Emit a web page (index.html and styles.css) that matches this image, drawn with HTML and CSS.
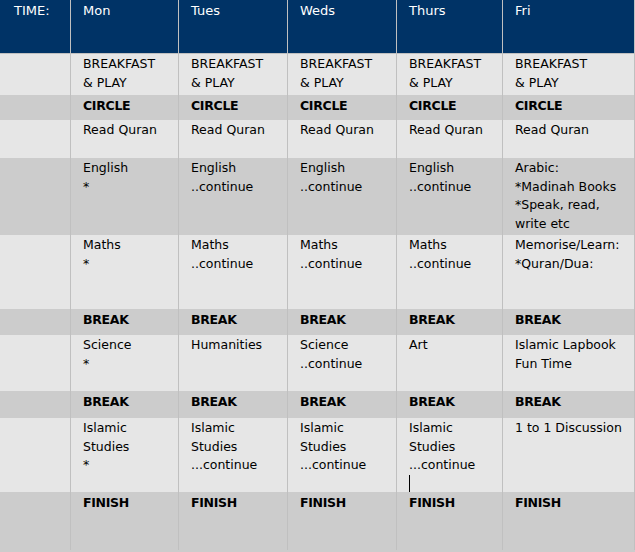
FILE: index.html
```html
<!DOCTYPE html>
<html>
<head>
<meta charset="utf-8">
<link rel="stylesheet" href="styles.css">
</head>
<body>
<div class="timetable">
  <div class="row head">
    <div class="cell first">TIME:</div>
    <div class="cell">Mon</div>
    <div class="cell">Tues</div>
    <div class="cell">Weds</div>
    <div class="cell">Thurs</div>
    <div class="cell">Fri</div>
  </div>
  <div class="row light">
    <div class="cell first"></div>
    <div class="cell">BREAKFAST<br>&amp; PLAY</div>
    <div class="cell">BREAKFAST<br>&amp; PLAY</div>
    <div class="cell">BREAKFAST<br>&amp; PLAY</div>
    <div class="cell">BREAKFAST<br>&amp; PLAY</div>
    <div class="cell">BREAKFAST<br>&amp; PLAY</div>
  </div>
  <div class="row dark bold">
    <div class="cell first"></div>
    <div class="cell">CIRCLE</div>
    <div class="cell">CIRCLE</div>
    <div class="cell">CIRCLE</div>
    <div class="cell">CIRCLE</div>
    <div class="cell">CIRCLE</div>
  </div>
  <div class="row light">
    <div class="cell first"></div>
    <div class="cell">Read Quran</div>
    <div class="cell">Read Quran</div>
    <div class="cell">Read Quran</div>
    <div class="cell">Read Quran</div>
    <div class="cell">Read Quran</div>
  </div>
  <div class="row dark">
    <div class="cell first"></div>
    <div class="cell">English<br>*</div>
    <div class="cell">English<br>..continue</div>
    <div class="cell">English<br>..continue</div>
    <div class="cell">English<br>..continue</div>
    <div class="cell">Arabic:<br>*Madinah Books<br>*Speak, read,<br>write etc</div>
  </div>
  <div class="row light">
    <div class="cell first"></div>
    <div class="cell">Maths<br>*</div>
    <div class="cell">Maths<br>..continue</div>
    <div class="cell">Maths<br>..continue</div>
    <div class="cell">Maths<br>..continue</div>
    <div class="cell">Memorise/Learn:<br>*Quran/Dua:</div>
  </div>
  <div class="row dark bold">
    <div class="cell first"></div>
    <div class="cell">BREAK</div>
    <div class="cell">BREAK</div>
    <div class="cell">BREAK</div>
    <div class="cell">BREAK</div>
    <div class="cell">BREAK</div>
  </div>
  <div class="row light">
    <div class="cell first"></div>
    <div class="cell">Science<br>*</div>
    <div class="cell">Humanities</div>
    <div class="cell">Science<br>..continue</div>
    <div class="cell">Art</div>
    <div class="cell">Islamic Lapbook<br>Fun Time</div>
  </div>
  <div class="row dark bold">
    <div class="cell first"></div>
    <div class="cell">BREAK</div>
    <div class="cell">BREAK</div>
    <div class="cell">BREAK</div>
    <div class="cell">BREAK</div>
    <div class="cell">BREAK</div>
  </div>
  <div class="row light">
    <div class="cell first"></div>
    <div class="cell">Islamic<br>Studies<br>*</div>
    <div class="cell">Islamic<br>Studies<br>...continue</div>
    <div class="cell">Islamic<br>Studies<br>...continue</div>
    <div class="cell">Islamic<br>Studies<br>...continue<br><span class="caret"></span></div>
    <div class="cell">1 to 1 Discussion</div>
  </div>
  <div class="row dark bold">
    <div class="cell first"></div>
    <div class="cell">FINISH</div>
    <div class="cell">FINISH</div>
    <div class="cell">FINISH</div>
    <div class="cell">FINISH</div>
    <div class="cell">FINISH</div>
  </div>
</div>
</body>
</html>
```
FILE: styles.css
```css
* {
  box-sizing: border-box;
}

html, body {
  margin: 0;
  padding: 0;
}

body {
  background: #cccccc;
  width: 635px;
  height: 552px;
  overflow: hidden;
  font-family: "DejaVu Sans", sans-serif;
  font-size: 12.5px;
  color: #000;
}

.timetable {
  display: grid;
  grid-template-columns: 71px 108px 109px 109px 106px 132px;
  grid-template-rows: 54px 41px 25px 38px 77px 74px 26px 56px 27px 74px 58px;
}

.row {
  display: contents;
}

.cell {
  border-right: 1px solid #c0c0c0;
  padding: 1px 4px 0 12px;
  line-height: 18.6px;
  white-space: nowrap;
}

.cell.first {
  padding-left: 14px;
}

.head > .cell {
  background: #003366;
  color: #ffffff;
  font-size: 13px;
  padding-top: 2px;
  border-bottom: 1px solid #c0c0c0;
}

.light > .cell {
  background: #e6e6e6;
}

.dark > .cell {
  background: #cccccc;
}

.bold > .cell {
  font-weight: bold;
  letter-spacing: -0.3px;
  padding-top: 2px;
}

.caret {
  display: inline-block;
  width: 1px;
  height: 17px;
  background: #000;
  vertical-align: top;
}
```
